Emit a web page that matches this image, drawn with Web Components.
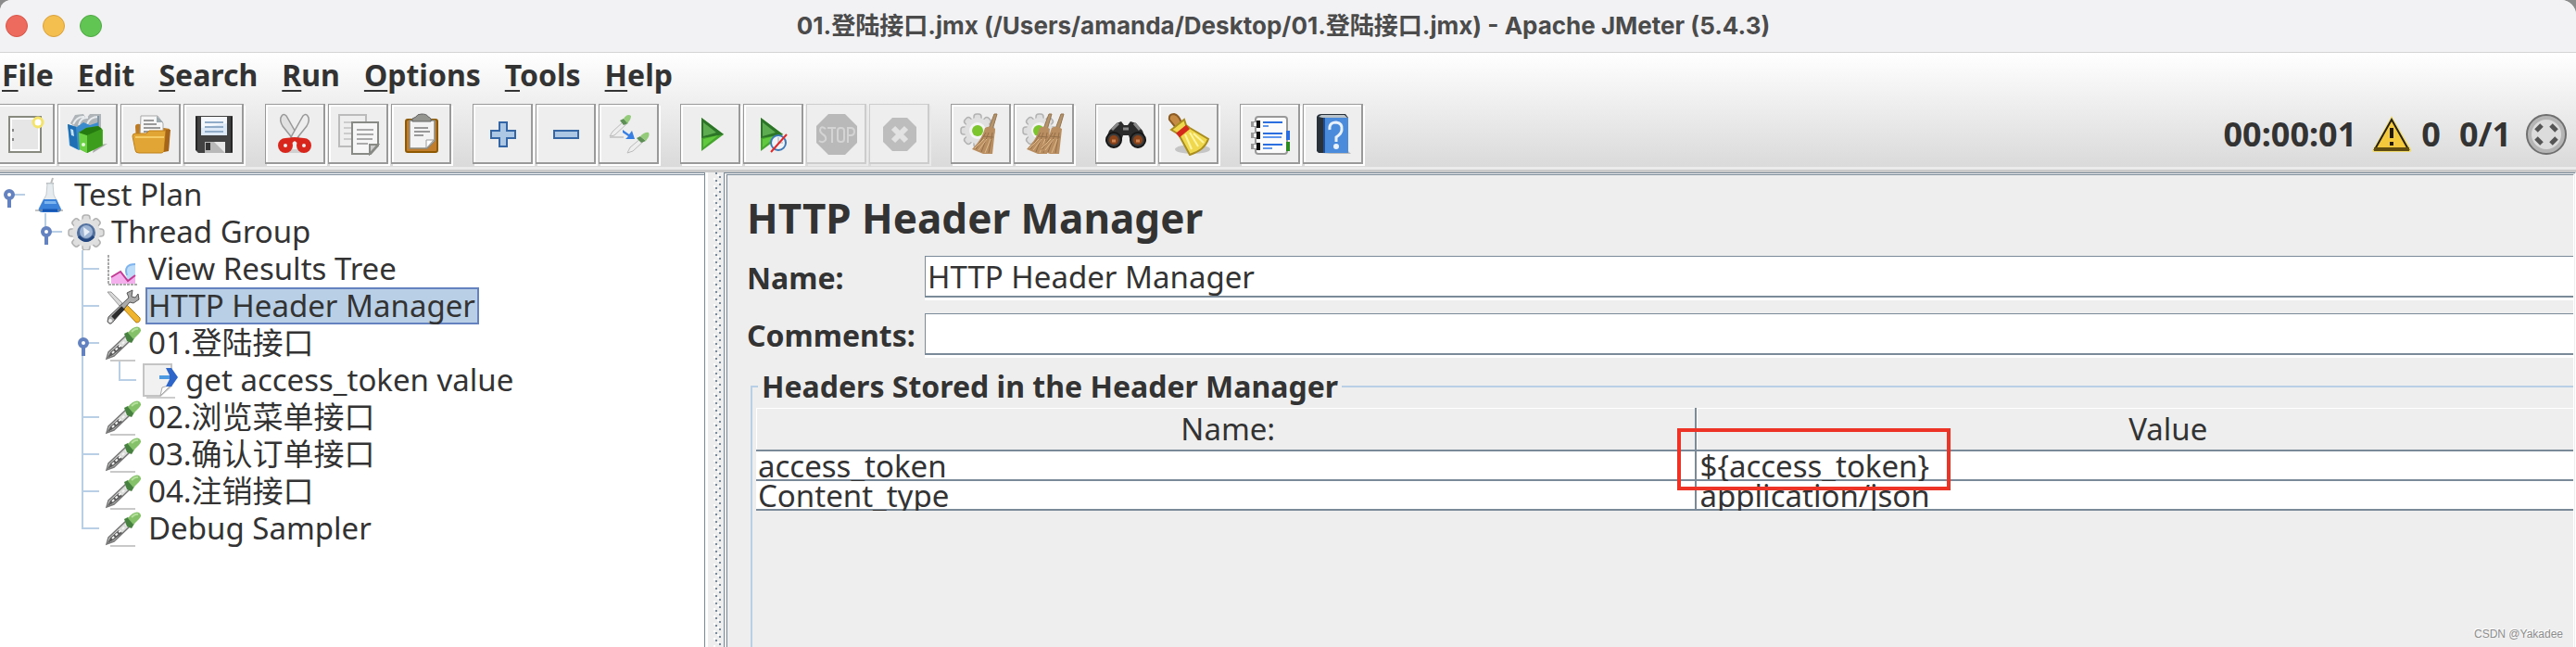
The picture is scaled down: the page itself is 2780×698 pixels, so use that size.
<!DOCTYPE html>
<html lang="zh-CN">
<head>
<meta charset="utf-8">
<title>01.登陆接口.jmx - Apache JMeter (5.4.3)</title>
<style>
  :root {
    --line: #7a8a99;
    --soft-line: #b8cfe5;
    --accent: #6382bf;
    --panel: #eeeeee;
    --text: #333333;
  }
  html, body { height: 100%; }
  body {
    margin: 0;
    overflow: hidden;
    background: #8c8c8c;
    color: var(--text);
    font-family: "Noto Sans", "Noto Sans CJK SC", sans-serif;
    font-size: 33px;
  }
</style>
</head>
<body>
<jm-window>
  <jm-titlebar slot="title">01.登陆接口.jmx (/Users/amanda/Desktop/01.登陆接口.jmx) - Apache JMeter (5.4.3)</jm-titlebar>

  <jm-menubar slot="bars">
    <jm-menu label="File"></jm-menu>
    <jm-menu label="Edit"></jm-menu>
    <jm-menu label="Search"></jm-menu>
    <jm-menu label="Run"></jm-menu>
    <jm-menu label="Options"></jm-menu>
    <jm-menu label="Tools"></jm-menu>
    <jm-menu label="Help"></jm-menu>
  </jm-menubar>

  <jm-toolbar slot="bars">
    <jm-group>
      <jm-tool icon="new" label="New"></jm-tool>
      <jm-tool icon="templates" label="Templates"></jm-tool>
      <jm-tool icon="open" label="Open"></jm-tool>
      <jm-tool icon="save" label="Save"></jm-tool>
    </jm-group>
    <jm-group>
      <jm-tool icon="cut" label="Cut"></jm-tool>
      <jm-tool icon="copy" label="Copy"></jm-tool>
      <jm-tool icon="paste" label="Paste"></jm-tool>
    </jm-group>
    <jm-group>
      <jm-tool icon="expand" label="Expand All"></jm-tool>
      <jm-tool icon="collapse" label="Collapse All"></jm-tool>
      <jm-tool icon="toggle" label="Toggle"></jm-tool>
    </jm-group>
    <jm-group>
      <jm-tool icon="start" label="Start"></jm-tool>
      <jm-tool icon="startNoTimers" label="Start no pauses"></jm-tool>
      <jm-tool icon="stop" label="Stop" disabled></jm-tool>
      <jm-tool icon="shutdown" label="Shutdown" disabled></jm-tool>
    </jm-group>
    <jm-group>
      <jm-tool icon="clear" label="Clear"></jm-tool>
      <jm-tool icon="clearAll" label="Clear All"></jm-tool>
    </jm-group>
    <jm-group>
      <jm-tool icon="search" label="Search"></jm-tool>
      <jm-tool icon="resetSearch" label="Reset Search"></jm-tool>
    </jm-group>
    <jm-group>
      <jm-tool icon="functions" label="Function Helper"></jm-tool>
      <jm-tool icon="help" label="Help"></jm-tool>
    </jm-group>
    <jm-status slot="status" time="00:00:01" errors="0" threads="0/1"></jm-status>
  </jm-toolbar>

  <jm-tree slot="tree">
    <jm-node icon="flask" label="Test Plan" handle root>
      <jm-node icon="gear" label="Thread Group" handle>
        <jm-node icon="chart" label="View Results Tree"></jm-node>
        <jm-node icon="tools" label="HTTP Header Manager" selected></jm-node>
        <jm-node icon="dropper" label="01.登陆接口" handle>
          <jm-node icon="extractor" label="get access_token value"></jm-node>
        </jm-node>
        <jm-node icon="dropper" label="02.浏览菜单接口"></jm-node>
        <jm-node icon="dropper" label="03.确认订单接口"></jm-node>
        <jm-node icon="dropper" label="04.注销接口"></jm-node>
        <jm-node icon="dropper" label="Debug Sampler"></jm-node>
      </jm-node>
    </jm-node>
  </jm-tree>

  <jm-header-panel slot="editor"></jm-header-panel>
  <jm-watermark slot="overlay">CSDN @Yakadee</jm-watermark>
</jm-window>

<script>
// --- Icon artwork: toolbar icons on a 48 grid, tree icons on a 40 grid ---
const DROPPER = `
  <path d="M2 37 L4 30 L23 12 L28 17 L10 34 Z" fill="#d9dcd9" stroke="#777" stroke-width="1.5"/>
  <path d="M3 36 L6 30 L15 22 L19 25 L9 33 Z" fill="#5b5b5b"/>
  <path d="M8 31 L24 16" stroke="#f4f4f4" stroke-width="2" stroke-dasharray="3 2"/>
  <path d="M21 10 L25 8 L32 15 L29 20 L24 18 Z" fill="#47813f"/>
  <path d="M25 9 Q32 1 37 3 Q41 6 37 10 L31 16 Z" fill="#84c169"/>
  <path d="M29 8 Q33 4 36 5" stroke="#b4e09c" stroke-width="2" fill="none"/>`;

const GEAR = (cx, cy, r) => {
  let teeth = '';
  for (let i = 0; i < 8; i++) {
    teeth += `<rect x="${cx - 4}" y="${cy - r}" width="8" height="9" rx="3" transform="rotate(${i * 45} ${cx} ${cy})"/>`;
  }
  return `<g fill="#dedede" stroke="#b2b2b2" stroke-width="1.5">${teeth}</g><circle cx="${cx}" cy="${cy}" r="${r - 4}" fill="#e0e0e0"/>`;
};

const BROOM = (x) => `
  <path d="M${x + 24} 3 L${x + 27} 3 L${x + 22} 20 L${x + 18} 19 Z" fill="#b3946c" stroke="#94744f"/>
  <path d="M${x + 14} 18 Q${x + 19} 15 ${x + 25} 19 L${x + 22} 46 L${x + 12} 46 L${x} 41 Q${x + 11} 30 ${x + 14} 18 Z" fill="#b98e61"/>
  <path d="M${x + 15} 23 L${x + 4} 41 M${x + 18} 23 L${x + 10} 44 M${x + 22} 23 L${x + 18} 45 M${x + 12} 27 L${x + 23} 28" stroke="#94704a" fill="none"/>
  <path d="M${x + 16} 30 L${x + 7} 42 M${x + 20} 30 L${x + 14} 45 M${x + 13} 30 L${x + 3} 40" stroke="#dfba8b" fill="none"/>`;

const OCTAGON = (a, b) => {
  const c = Math.round((b - a) * 0.29);
  return `M${a + c} ${a} H${b - c} L${b} ${a + c} V${b - c} L${b - c} ${b} H${a + c} L${a} ${b - c} V${a + c} Z`;
};

const ICONS = {
  new: `
    <rect x="8" y="6" width="34" height="38" fill="#e6e6e6" stroke="#888a80" stroke-width="2"/>
    <rect x="10" y="8" width="30" height="34" fill="none" stroke="#fff" stroke-width="2"/>
    <path d="M12 19 v3 M12 29 v3" stroke="#888" stroke-width="2"/>
    <circle cx="39" cy="12" r="5" fill="#fff" stroke="#f3e36b" stroke-width="3"/>`,
  templates: `
    <path d="M32 37 L46 35 L30 45 Z" fill="#aaa"/>
    <path d="M6 13 L11 4 L20 3 L23 8 L27 3 L39 3 L39 21 L24 27 Z" fill="#aeb4b8"/>
    <path d="M9 14 Q13 5 21 6 M15 15 Q17 6 25 7 M24 14 Q27 6 36 6" stroke="#e8ebed" stroke-width="2" fill="none"/>
    <path d="M36 5 V20" stroke="#7e95a8" stroke-width="2"/>
    <path d="M3 14 L13 17 L20 12 L27 15 L36 12 V30 L15 42 L5 37 Z" fill="#3a8ccc"/>
    <path d="M3 14 L12 17 L14 41 L6 37 Z" fill="#1f6fb4"/><path d="M6 19 L9 20 L10 27 L7 26 Z" fill="#c4e1f5"/>
    <path d="M15 23 L23 18 L36 16 L41 20 V37 L24 45 L16 41 Z" fill="#4caf28"/>
    <path d="M15 23 L24 26 V45 L16 41 Z" fill="#6cd044"/><path d="M24 26 L40 19 V37 L24 45 Z" fill="#3c9c1c"/>
    <path d="M15 23 L23 18 L36 16 L40 19 L24 26 Z" fill="#257a10"/><circle cx="20" cy="36" r="2" fill="#e3f9d8"/>`,
  open: `
    <path d="M8 17 Q8 13 13 14 L16 18 H39 L45 19 L44 43 H10 Z" fill="#bc7b22"/>
    <path d="M14 5 H32 L38 13 V28 H13 Z" fill="#f6f6f6" stroke="#a9a9a9"/>
    <path d="M31 5 V12 H38 Z" fill="#9daab0"/><path d="M17 10 H28 M17 14 H31 M17 18 H35 M17 22 H35" stroke="#999" stroke-width="2"/>
    <path d="M5 27 Q5 24 8 24 H20 L23 21 H41 L39 43 Q38 45 36 45 H12 Q8 45 8 42 Z" fill="#e0a535" stroke="#c08018"/>
    <path d="M8 28 H39" stroke="#f6cc66" stroke-width="2"/><path d="M41 20 L46 20 L44 43 L39 44 Z" fill="#a4641a"/>`,
  save: `
    <path d="M5 5 H45 V45 H8 L5 42 Z" fill="#424242"/><path d="M6 6 V42 M44 6 V44" stroke="#252525" stroke-width="2"/>
    <rect x="11" y="6" width="28" height="20" fill="#dde9f6"/>
    <path d="M11 6 H39 V13 L11 18 Z" fill="#f4f8fc"/><path d="M15 12 H35 M15 17 H35 M15 22 H35" stroke="#91acc9" stroke-width="2"/>
    <rect x="15" y="33" width="22" height="12" fill="#b8b8b8"/><path d="M25 33 H37 V45 Z" fill="#e7e7e7"/>
    <rect x="16" y="34" width="5" height="8" fill="#333"/>`,
  cut: `
    <ellipse cx="24" cy="43" rx="14" ry="2" fill="#d0d0d0"/>
    <path d="M10 5 Q7 9 11 16 L23 31 L28 28 L15 5 Q12 2 10 5 Z" fill="#e1e1e1" stroke="#999" stroke-width="1.5"/>
    <path d="M38 5 Q41 9 37 16 L25 31 L20 28 L33 5 Q36 2 38 5 Z" fill="#eee" stroke="#999" stroke-width="1.5"/>
    <g fill="none" stroke="#d9261c" stroke-width="6"><ellipse cx="14" cy="37" rx="5" ry="5"/><ellipse cx="34" cy="37" rx="5" ry="5"/></g>
    <path d="M14 29 L24 28 L34 29 L29 36 L24 32 L19 36 Z" fill="#d9261c"/>`,
  copy: `
    <rect x="4" y="4" width="29" height="34" fill="#eee" stroke="#bbb" stroke-width="2"/>
    <path d="M9 12 H18 M9 18 H18 M9 24 H18 M9 30 H18" stroke="#ccc" stroke-width="2"/>
    <path d="M18 12 H46 V37 L38 46 H18 Z" fill="#f6f6f6" stroke="#888a85" stroke-width="2"/>
    <path d="M46 36 H37 V46 Z" fill="#ccc" stroke="#888a85" stroke-width="2"/>
    <path d="M23 20 H41 M23 25 H41 M23 30 H40 M23 35 H35" stroke="#aaa" stroke-width="2"/>`,
  paste: `
    <rect x="8" y="9" width="34" height="35" rx="2" fill="#c17d2c" stroke="#8f5902" stroke-width="2"/>
    <path d="M12 10 H39 V32 L31 40 H12 Z" fill="#f3f3f3" stroke="#8a8a80" stroke-width="1.5"/>
    <path d="M38 31 H30 V40 Z" fill="#fff" stroke="#999"/>
    <path d="M17 18 H32 M17 22 H34 M17 26 H27" stroke="#999" stroke-width="2"/>
    <path d="M15 11 V8 Q17 7 19 6 Q20 3 25 3 Q31 3 32 6 Q36 7 35 11 Z" fill="#93958e" stroke="#666" stroke-width="1"/>`,
  expand: `<path d="M21 12 H29 V21 H38 V29 H29 V38 H21 V29 H12 V21 H21 Z" fill="#abc7e3" stroke="#3465a4" stroke-width="2"/>`,
  collapse: `<rect x="12" y="21" width="26" height="8" fill="#abc7e3" stroke="#3465a4" stroke-width="2"/>`,
  toggle: `
    <path d="M4 27 L7 22 L19 11 L22 14 L9 26 Z" fill="#eee" stroke="#bbb"/>
    <path d="M15 10 L19 8 L24 13 L19 15 Z" fill="#5e8f55"/><path d="M19 8 Q23 2 27 5 Q27 9 23 13 Z" fill="#94cb7b"/>
    <path d="M4 28 H19" stroke="#ccc" stroke-width="2"/>
    <path d="M18 20 L25 25 L28 21 L31 30 L21 30 L24 27 L18 23 Z" fill="#377fe3"/>
    <path d="M23 45 L26 39 L38 29 L41 32 L29 43 Z" fill="#eee" stroke="#bbb"/>
    <path d="M33 29 L37 27 L43 32 L38 34 Z" fill="#5e8f55"/><path d="M37 27 Q42 22 46 23 Q48 26 43 32 Z" fill="#94cb7b"/>`,
  start: `
    <path d="M15 7 L39 25 L15 43 Z" fill="#46a52e"/><path d="M15 7 L39 25 L15 29 Z" fill="#2c7427"/>
    <path d="M17 12 L31 23 L17 27 Z" fill="#5dac50"/><path d="M17 30 L33 26 L17 39 Z" fill="#60c93d"/>`,
  startNoTimers: `
    <path d="M11 7 L35 25 L11 43 Z" fill="#46a52e"/><path d="M11 7 L35 25 L11 29 Z" fill="#2c7427"/>
    <path d="M13 12 L27 23 L13 27 Z" fill="#5dac50"/><path d="M13 30 L29 26 L13 39 Z" fill="#60c93d"/>
    <circle cx="30" cy="34" r="8" fill="#eef3f8" stroke="#3d78b8" stroke-width="2"/><path d="M30 28 V34 H35" stroke="#aaa" fill="none"/>
    <path d="M22 44 L39 25" stroke="#e02a2a" stroke-width="2"/>`,
  stop: `
    <path d="${OCTAGON(3, 47)}" fill="#b9b9b9"/>
    <g fill="none" stroke="#d4d4d4" stroke-width="2">
      <path d="M13 19 Q8 15 7 20 Q7 23 10 25 Q14 27 13 31 Q10 35 6 32"/><path d="M15 18 H24 M20 18 V34"/>
      <rect x="26" y="18" width="7" height="15" rx="3"/><path d="M37 34 V18 H40 Q44 18 44 22 Q44 26 40 26 H37"/>
    </g>`,
  shutdown: `<path d="${OCTAGON(7, 43)}" fill="#bdbdbd"/><path d="M18 18 L32 32 M32 18 L18 32" stroke="#e2e2e2" stroke-width="6"/>`,
  clear: `${GEAR(21, 21, 18)}<circle cx="21" cy="21" r="9" fill="#f4f4f4"/><circle cx="21" cy="21" r="6" fill="#7cc52c"/>${BROOM(15)}`,
  clearAll: `${GEAR(20, 21, 18)}<circle cx="20" cy="21" r="9" fill="#f4f4f4"/><circle cx="19" cy="21" r="6" fill="#7cc52c"/>${BROOM(6)}${BROOM(19)}`,
  search: `
    <path d="M3 32 L7 21 L15 13 L20 11 L23 15 H27 L30 11 L36 13 L43 21 L47 32 L41 38 L31 35 L28 26 H22 L19 35 L9 38 Z" fill="#2b2b2b"/>
    <path d="M10 20 L17 13 M34 13 L40 20 M22 19 H28" stroke="#888" stroke-width="3"/>
    <circle cx="12" cy="31" r="8" fill="#3a3a3a" stroke="#161616" stroke-width="2"/><circle cx="38" cy="31" r="8" fill="#3a3a3a" stroke="#161616" stroke-width="2"/>
    <circle cx="12" cy="31" r="5" fill="#8b4319"/><circle cx="38" cy="31" r="5" fill="#8b4319"/>
    <path d="M10 32 h4 M36 32 h4" stroke="#ce8452" stroke-width="3"/>`,
  resetSearch: `
    <ellipse cx="29" cy="41" rx="19" ry="5" fill="#c5c5c5"/>
    <path d="M4 9 Q3 3 9 3 Q13 4 15 8 L19 16 L12 19 Z" fill="#c58b45" stroke="#8d5c24" stroke-width="2"/>
    <path d="M6 20 L20 9 L22 15 L26 18 L46 30 Q42 42 26 47 L14 25 Z" fill="#efd84d" stroke="#a98d1e" stroke-width="2"/>
    <path d="M21 25 L28 41 M26 23 L35 38 M30 24 L41 34" stroke="#fff4a2" stroke-width="2"/>
    <path d="M13 26 L24 17" stroke="#d32a1c" stroke-width="6"/>`,
  functions: `
    <rect x="9" y="6" width="34" height="40" rx="3" fill="#fbfbfb" stroke="#999" stroke-width="2"/>
    <rect x="42" y="21" width="4" height="10" fill="#2b6ee0"/><rect x="42" y="33" width="4" height="10" fill="#2a8a1e"/>
    <path d="M4 14 H11 M4 26 H11 M4 38 H11" stroke="#999" stroke-width="6"/>
    <path d="M7 14 H11 M7 26 H11 M7 38 H11" stroke="#eee" stroke-width="4"/>
    <path d="M12 10 V18 M12 22 V30 M12 34 V42" stroke="#111" stroke-width="4"/>
    <path d="M17 12 H38 M17 24 H38 M17 36 H38" stroke="#2b6ee0" stroke-width="2"/>
    <path d="M17 16 H23 M17 28 H37 M17 40 H27" stroke="#5f97ef" stroke-width="2"/>`,
  help: `
    <path d="M12 46 H44 L41 43 Z" fill="#bbb"/>
    <path d="M7 6 Q8 3 12 3 H38 L41 7 V45 H9 L7 43 Z" fill="#29313a"/><path d="M9 6 L12 4 H37 L40 7 H13 Z" fill="#b8c2c8"/>
    <rect x="15" y="7" width="26" height="38" fill="#4b8bdc"/><path d="M15 7 V45" stroke="#1f4d8f" stroke-width="2"/>
    <path d="M21 20 Q20 12 28 12 Q35 13 34 20 Q34 24 28 28 V33" stroke="#e8f1fc" stroke-width="3" fill="none"/>
    <circle cx="28" cy="38" r="3" fill="#e8f1fc"/>`,
  warning: `
    <path d="M24 4 L45 40 Q46 43 43 43 H5 Q2 43 4 40 Z" fill="#f0dc6e"/>
    <path d="M24 8 L42 40 H6 Z" fill="#f5c93c" stroke="#252013" stroke-width="2"/><path d="M5 40 H43" stroke="#624d10" stroke-width="4"/>
    <path d="M24 17 V28" stroke="#201b10" stroke-width="4"/><rect x="22" y="32" width="4" height="4" fill="#201b10"/>`,
  activity: `
    <circle cx="24" cy="24" r="21" fill="#b5b5b5" stroke="#6f6f6f" stroke-width="2"/><circle cx="24" cy="24" r="16" fill="#dcdcdc"/>
    <path d="M13 20 L19 14 M29 14 L35 20 M13 28 L19 34 M29 34 L35 28" stroke="#555" stroke-width="5"/>`,
  flask: `
    <path d="M24 2 L22 8 M17 8 H25" stroke="#bbb" stroke-width="2"/>
    <path d="M18 8 H24 L25 20 L33 36 Q33 38 30 38 H11 Q8 38 9 35 L17 20 Z" fill="#e5ebee" stroke="#c4ccd0"/>
    <path d="M14 25 H28 L33 36 Q32 39 29 39 H12 Q8 38 9 35 Z" fill="#3b82db"/>
    <path d="M15 27 H27 L28 30 H15 Z" fill="#7bb4ef"/><path d="M5 37 H35" stroke="#888" stroke-width="1"/><path d="M13 37 H29" stroke="#1555b4" stroke-width="3"/>`,
  gear: `${GEAR(20, 21, 19)}
    <circle cx="20" cy="21" r="10" fill="#52719f"/><circle cx="20" cy="20" r="7" fill="#9db3d3"/><path d="M17 15 L24 20 L18 25 Z" fill="#e8eef6"/>
    <path d="M12 25 Q20 34 28 25" stroke="#23467f" stroke-width="3" fill="none"/>`,
  chart: `
    <path d="M4 5 V37 H35" stroke="#aaa" stroke-width="2" fill="none" stroke-dasharray="3 1"/>
    <path d="M25 36 L23 26 Q20 14 33 15 V36 Z" fill="#bcdcf8"/><path d="M24 27 Q20 15 33 15" stroke="#7fb4ee" stroke-width="2" fill="none"/>
    <path d="M7 36 V29 L17 23 L25 33 L33 27 V36 Z" fill="#f3b0ec"/><path d="M7 29 L17 23 L25 33 L33 27" stroke="#c23c94" stroke-width="2" fill="none"/>`,
  tools: `
    <path d="M3 5 L7 5 L19 17 L16 20 Z" fill="#d8d8d8" stroke="#999"/>
    <path d="M20 23 L24 19 L38 33 Q39 38 34 38 Z" fill="#f0b52e" stroke="#b87d10"/>
    <path d="M4 32 L26 11 L24 6 L30 3 L29 10 L33 11 L36 7 L37 13 L31 17 L27 16 L10 36 Q6 42 3 37 Z" fill="#aaa" stroke="#555"/>
    <path d="M9 33 L20 22" stroke="#2c2c2c" stroke-width="5"/><circle cx="6" cy="36" r="2" fill="#eee"/>`,
  dropper: `<path d="M6 39 H33" stroke="#c9c9c9" stroke-width="2"/>${DROPPER}`,
  extractor: `
    <path d="M5 39 H36" stroke="#ccc" stroke-width="2"/>
    <path d="M2 3 H32 V26 L20 37 H2 Z" fill="#f1f1f1" stroke="#c4c4c4" stroke-width="2"/>
    <path d="M32 25 L22 28 L20 37 Z" fill="#fff" stroke="#aaa"/>
    <path d="M19 15 H30 V19 H19 Z" fill="#4d9ae0"/><path d="M26 7 L32 7 L39 17 L32 27 L26 27 L30 19 V15 Z" fill="#2d66c8"/>`
};

function shadow(el, html) {
  el.attachShadow({ mode: 'open' }).innerHTML = html;
  return el.shadowRoot;
}

class JmIcon extends HTMLElement {
  connectedCallback() {
    const size = Number(this.getAttribute('size')) || 48;
    shadow(this, `
      <style>
        :host { display: block; flex: none; }
        svg { display: block; }
      </style>
      <svg width="${size}" height="${size}" viewBox="0 0 ${size} ${size}" aria-hidden="true">${ICONS[this.getAttribute('name')]}</svg>
    `);
  }
}

class JmWindow extends HTMLElement {
  constructor() {
    super();
    shadow(this, `
      <style>
        :host {
          display: flex;
          flex-direction: column;
          height: 100vh;
          overflow: hidden;
          position: relative;
          border-radius: 12px 16px 0 0;
          background: var(--panel);
        }
        .bars {
          background: linear-gradient(#ffffff, #dadada);
          border-bottom: 3px solid #ebebeb;
        }
        .split {
          flex: 1;
          min-height: 0;
          display: grid;
          grid-template-columns: 765px 16px minmax(0, 1fr);
          border-top: 3px solid #c9c9c9;
        }
        /* two staggered columns of raised dots */
        .divider {
          background:
            conic-gradient(from 0deg at 2px 2px, transparent 75%, var(--line) 0) 7px 8px / 16px 8px,
            conic-gradient(from 0deg at 2px 2px, transparent 75%, var(--line) 0) 11px 12px / 16px 8px,
            conic-gradient(from 0deg at 2px 2px, transparent 75%, #fff 0) 5px 6px / 16px 8px,
            conic-gradient(from 0deg at 2px 2px, transparent 75%, #fff 0) 9px 10px / 16px 8px;
        }
      </style>
      <slot name="title"></slot>
      <div class="bars"><slot name="bars"></slot></div>
      <div class="split">
        <slot name="tree"></slot>
        <div class="divider"></div>
        <slot name="editor"></slot>
      </div>
      <slot name="overlay"></slot>
    `);
  }
}

class JmTitlebar extends HTMLElement {
  constructor() {
    super();
    shadow(this, `
      <style>
        :host {
          display: grid;
          grid-template-columns: 120px 1fr 130px;
          align-items: center;
          height: 56px;
          background: #f2f2f4;
          border-bottom: 1px solid #d4d4d4;
          font: 700 26px/32px Inter, "Noto Sans CJK SC", sans-serif;
          color: #4b4b4b;
        }
        .lights { display: flex; gap: 16px; padding-left: 6px; }
        button {
          width: 24px;
          height: 24px;
          padding: 0;
          border: 1px solid #d95548;
          border-radius: 50%;
          background: #ed6a5e;
        }
        .min { background: #f5bf4f; border-color: #d9a13c; }
        .max { background: #61c554; border-color: #50a844; }
        .title { text-align: center; white-space: nowrap; }
      </style>
      <div class="lights">
        <button aria-label="Close"></button>
        <button class="min" aria-label="Minimize"></button>
        <button class="max" aria-label="Zoom"></button>
      </div>
      <div class="title"><slot></slot></div>
    `);
  }
}

class JmMenubar extends HTMLElement {
  constructor() {
    super();
    shadow(this, `
      <style>
        :host { display: flex; gap: 26px; padding: 0 2px; height: 48px; align-items: center; }
      </style>
      <slot></slot>
    `);
  }
}

class JmMenu extends HTMLElement {
  connectedCallback() {
    const label = this.getAttribute('label');
    shadow(this, `
      <style>
        :host { display: block; }
        button {
          display: block;
          padding: 0;
          border: 0;
          background: none;
          color: inherit;
          font: 700 32px/42px "Noto Sans", sans-serif;
        }
        u { text-decoration-thickness: 2px; text-underline-offset: 4px; }
      </style>
      <button><u>${label[0]}</u>${label.slice(1)}</button>
    `);
  }
}

class JmToolbar extends HTMLElement {
  constructor() {
    super();
    shadow(this, `
      <style>
        :host { display: flex; justify-content: space-between; padding-top: 7px; }
        .groups { display: flex; gap: 20px; margin-left: -6px; }
      </style>
      <div class="groups"><slot></slot></div>
      <slot name="status"></slot>
    `);
  }
}

class JmGroup extends HTMLElement {
  constructor() {
    super();
    shadow(this, `
      <style>:host { display: flex; }</style>
      <slot></slot>
    `);
  }
}

class JmTool extends HTMLElement {
  connectedCallback() {
    const disabled = this.hasAttribute('disabled');
    shadow(this, `
      <style>
        :host { display: block; padding: 0 3px 3px 0; }
        button {
          display: grid;
          place-items: center;
          width: 65px;
          height: 65px;
          padding: 0;
          border: solid #999;
          border-width: 1px 2px 2px 1px;
          background: var(--panel);
          box-shadow: inset 2px 2px #fff, 2px 2px #fff;
        }
        button:disabled { border-color: #ccc; box-shadow: 2px 2px #e9e9e9; }
      </style>
      <button aria-label="${this.getAttribute('label')}" ${disabled ? 'disabled' : ''}>
        <jm-icon name="${this.getAttribute('icon')}"></jm-icon>
      </button>
    `);
  }
}

class JmStatus extends HTMLElement {
  connectedCallback() {
    shadow(this, `
      <style>
        :host {
          display: flex;
          align-items: center;
          height: 66px;
          padding-right: 8px;
          font: 700 36px/44px "Noto Sans", sans-serif;
        }
        .time { margin-right: 14px; }
        .errors { margin: 0 20px 0 8px; }
        .threads { margin-right: 14px; }
      </style>
      <span class="time">${this.getAttribute('time')}</span>
      <jm-icon name="warning"></jm-icon>
      <span class="errors">${this.getAttribute('errors')}</span>
      <span class="threads">${this.getAttribute('threads')}</span>
      <jm-icon name="activity"></jm-icon>
    `);
  }
}

class JmTree extends HTMLElement {
  constructor() {
    super();
    shadow(this, `
      <style>
        :host {
          display: block;
          min-height: 0;
          overflow: hidden;
          padding-top: 1px;
          border-top: 3px double var(--line);
          border-right: 1px solid var(--line);
          margin-right: 4px;
          background: #fff;
          box-shadow: 3px 0 #fff;
        }
      </style>
      <div role="tree"><slot></slot></div>
    `);
  }
}

class JmNode extends HTMLElement {
  connectedCallback() {
    const hasHandle = this.hasAttribute('handle');
    shadow(this, `
      <style>
        :host {
          display: block;
          background: linear-gradient(var(--soft-line), var(--soft-line)) 8px 0 / 2px 100% no-repeat;
        }
        :host(:last-child) { background-size: 2px 21px; }
        :host([root]) { background: none; }
        .row { display: flex; align-items: center; height: 40px; }
        .stub {
          width: 33px;
          height: 40px;
          background: linear-gradient(var(--soft-line), var(--soft-line)) 8px 19px / 19px 2px no-repeat;
        }
        .stub svg { display: block; }
        .label {
          margin-left: 4px;
          padding: 0 2px 0 1px;
          border: 2px solid transparent;
          line-height: 36px;
          white-space: nowrap;
        }
        :host([selected]) .label { background: var(--soft-line); border-color: var(--accent); }
        .children { margin-left: 40px; }
      </style>
      <div class="row" role="treeitem">
        <div class="stub">${hasHandle ? `
          <svg width="33" height="40" viewBox="0 0 33 40">
            <rect x="2" y="18" width="6" height="4" fill="#fff"/>
            <path d="M10 24 V34" stroke="#6382bf" stroke-width="4"/>
            <circle cx="10" cy="20" r="4" fill="#fff" stroke="#6382bf" stroke-width="4"/>
          </svg>` : ''}
        </div>
        <jm-icon name="${this.getAttribute('icon')}" size="40"></jm-icon>
        <span class="label">${this.getAttribute('label')}</span>
      </div>
      <div class="children" role="group"><slot></slot></div>
    `);
  }
}

class JmField extends HTMLElement {
  connectedCallback() {
    shadow(this, `
      <style>
        :host { display: grid; grid-template-columns: 192px minmax(0, 1fr); align-items: center; }
        label { font-size: 32px; font-weight: 700; line-height: 44px; }
        input {
          box-sizing: border-box;
          width: 100%;
          height: 45px;
          margin-bottom: 3px;
          padding: 0 2px;
          border: solid var(--line);
          border-width: 1px 0 2px 1px;
          border-radius: 0;
          outline: 0;
          background: #fff;
          box-shadow: 0 3px #fff;
          color: inherit;
          font: inherit;
        }
      </style>
      <label for="field">${this.getAttribute('label')}</label>
      <input id="field" type="text" value="${this.getAttribute('value') || ''}">
    `);
  }
}

class JmHeaderPanel extends HTMLElement {
  constructor() {
    super();
    shadow(this, `
      <style>
        :host {
          display: block;
          min-height: 0;
          overflow: hidden;
          border-top: 3px double var(--line);
          border-left: 4px double var(--line);
          border-right: 3px double #fff;
          padding-left: 21px;
        }
        h1 { margin: 16px 0 11px; font-size: 44px; line-height: 60px; }
        .fields { display: grid; gap: 14px; }
        fieldset {
          margin: 8px -20px 0 4px;
          padding: 0 0 300px 4px;
          border: 2px solid var(--soft-line);
          min-width: 0;
        }
        legend {
          margin-left: 2px;
          padding: 0 4px;
          font-size: 32px;
          font-weight: 700;
          line-height: 46px;
        }
        table {
          width: calc(100% + 50px);
          table-layout: fixed;
          border-collapse: separate;
          border-spacing: 0;
        }
        th {
          height: 45px;
          padding: 0 0 0 6px;
          border: solid var(--line);
          border-width: 0 2px 2px 0;
          box-shadow: inset 1px 1px #fff;
          font-weight: 400;
          line-height: 45px;
        }
        td {
          position: relative;
          height: 30px;
          padding: 0;
          border: solid var(--line);
          border-width: 0 2px 2px 0;
          background: #fff;
        }
        /* rows are shorter than the text, so descenders run onto the grid line */
        .cell { height: 32px; margin-bottom: -2px; padding-left: 2px; overflow: hidden; line-height: 31px; }
        td + td .cell { padding-left: 4px; }
        .mark {
          position: absolute;
          z-index: 1;
          left: -21px;
          top: -25px;
          width: 287px;
          height: 59px;
          border: 4px solid #ed3325;
        }
      </style>
      <h1>HTTP Header Manager</h1>
      <div class="fields">
        <jm-field label="Name:" value="HTTP Header Manager"></jm-field>
        <jm-field label="Comments:"></jm-field>
      </div>
      <fieldset>
        <legend>Headers Stored in the Header Manager</legend>
        <table>
          <thead>
            <tr><th>Name:</th><th>Value</th></tr>
          </thead>
          <tbody>
            <tr>
              <td><div class="cell">access_token</div></td>
              <td><div class="cell">\${access_token}</div><div class="mark"></div></td>
            </tr>
            <tr>
              <td><div class="cell">Content_type</div></td>
              <td><div class="cell">application/json</div></td>
            </tr>
          </tbody>
        </table>
      </fieldset>
    `);
  }
}

class JmWatermark extends HTMLElement {
  constructor() {
    super();
    shadow(this, `
      <style>
        :host {
          position: absolute;
          right: 14px;
          bottom: 6px;
          color: #8d8d8d;
          font: 12px/16px "Liberation Sans", sans-serif;
          text-shadow: -1px -1px #fff;
        }
      </style>
      <slot></slot>
    `);
  }
}

customElements.define('jm-icon', JmIcon);
customElements.define('jm-window', JmWindow);
customElements.define('jm-titlebar', JmTitlebar);
customElements.define('jm-menubar', JmMenubar);
customElements.define('jm-menu', JmMenu);
customElements.define('jm-toolbar', JmToolbar);
customElements.define('jm-group', JmGroup);
customElements.define('jm-tool', JmTool);
customElements.define('jm-status', JmStatus);
customElements.define('jm-tree', JmTree);
customElements.define('jm-node', JmNode);
customElements.define('jm-field', JmField);
customElements.define('jm-header-panel', JmHeaderPanel);
customElements.define('jm-watermark', JmWatermark);
</script>
</body>
</html>
